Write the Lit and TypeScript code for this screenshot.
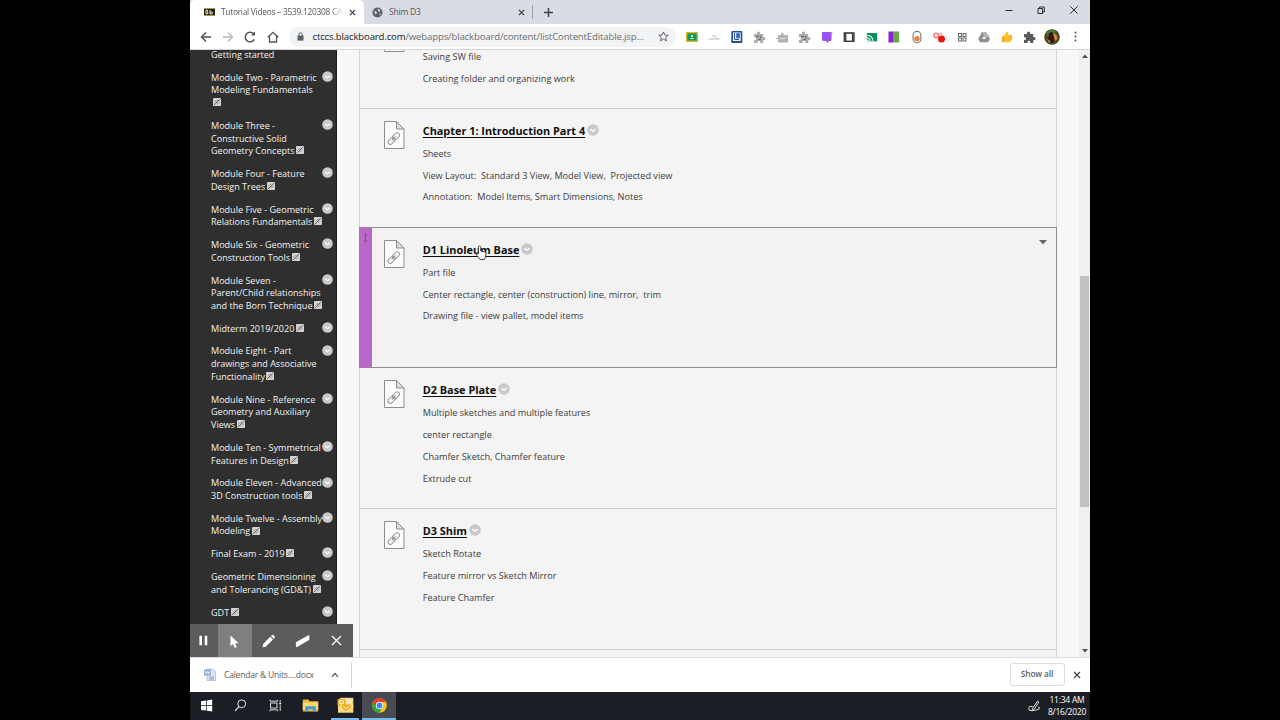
import { LitElement, html, css, svg } from "lit";
import { customElement } from "lit/decorators.js";

const modules: string[][] = [
  ["Getting started"],
  ["Module Two - Parametric", "Modeling Fundamentals", "*"],
  ["Module Three -", "Constructive Solid", "Geometry Concepts*"],
  ["Module Four - Feature", "Design Trees*"],
  ["Module Five - Geometric", "Relations Fundamentals*"],
  ["Module Six - Geometric", "Construction Tools*"],
  ["Module Seven -", "Parent/Child relationships", "and the Born Technique*"],
  ["Midterm 2019/2020*"],
  ["Module Eight - Part", "drawings and Associative", "Functionality*"],
  ["Module Nine - Reference", "Geometry and Auxiliary", "Views*"],
  ["Module Ten - Symmetrical", "Features in Design*"],
  ["Module Eleven - Advanced", "3D Construction tools*"],
  ["Module Twelve - Assembly", "Modeling*"],
  ["Final Exam - 2019*"],
  ["Geometric Dimensioning", "and Tolerancing (GD&T)*"],
  ["GDT*"],
];

const entries = [
  { cls: "first", title: "", lines: ["Saving SW file", "Creating folder and organizing work"] },
  { cls: "short", title: "Chapter 1: Introduction Part 4", lines: ["Sheets", "View Layout:\u00a0 Standard 3 View, Model View,\u00a0 Projected view", "Annotation:\u00a0 Model Items, Smart Dimensions, Notes"] },
  { cls: "active", title: "D1 Linoleum Base", lines: ["Part file", "Center rectangle, center (construction) line, mirror,\u00a0 trim", "Drawing file - view pallet, model items"] },
  { cls: "", title: "D2 Base Plate", lines: ["Multiple sketches and multiple features", "center rectangle", "Chamfer Sketch, Chamfer feature", "Extrude cut"] },
  { cls: "", title: "D3 Shim", lines: ["Sketch Rotate", "Feature mirror vs Sketch Mirror", "Feature Chamfer"] },
];

const chevron = (cls: string) => html`<svg class=${cls} viewBox="0 0 12 12"><circle cx="6" cy="6" r="5.8" /><path d="M3.4 5.1l2.6 2.2L8.6 5.1" /></svg>`;

const hidden = html`<svg class="hid" viewBox="0 0 8 8"><rect width="8" height="8" rx=".8" fill="#d2d2d2" /><path d="M1.3 4.5Q2.5 2.3 4.6 2.4M3.8 6Q5.8 5.6 6.7 3.8" fill="none" stroke="#8a8a8a" stroke-width=".7" /><path d="M1.3 6.8L6.8 1.3" fill="none" stroke="#444" stroke-width=".9" /></svg>`;

const doc = html`<svg class="doc" viewBox="0 0 22 30">
  <path d="M1.5 1.5H13.5L21 9V28.5H1.5Z" fill="#fbfbfb" stroke="#8d8d8d" />
  <path d="M13.5 1.5V9H21Z" fill="#dedede" stroke="#8d8d8d" />
  <g fill="none" stroke="#979797" stroke-width="1" transform="rotate(-45 10.8 18.5)">
    <rect x="3.5" y="16.2" width="8" height="4.6" rx="2.3" /><rect x="9.9" y="16.2" width="8" height="4.6" rx="2.3" /><path d="M7.8 18.5h6" />
  </g></svg>`;

const piece = "M2 4h3V3a1.6 1.6 0 0 1 3.2 0v1h3v3h.8a1.6 1.6 0 0 1 0 3.2h-.8V13H8.2v-1a1.3 1.3 0 0 0-2.6 0v1H2v-3h.7a1.4 1.4 0 0 0 0-2.8H2z";

const extensions = [
  svg`<rect x="1" y="2" width="12" height="10" fill="#d9b52e"/><rect x="2.4" y="3.4" width="9.2" height="7.2" fill="#159a58"/><circle cx="7" cy="6" r="1.1" fill="#fff"/><path d="M4.7 9Q7 6.8 9.3 9z" fill="#fff"/>`,
  svg`<path d="M1.5 9H12.5M5 6.5Q7 4.5 8 6.3T10.5 8" fill="none" stroke="#b9bdbd" stroke-width="1"/>`,
  svg`<rect x="1.3" y="1" width="11" height="12" rx="1" fill="#254f99"/><rect x="3" y="2.5" width="7.6" height="8.5" fill="#fff"/><path d="M6.2 3.2H9.8V8.4H6.2z" fill="#3563ad"/><path d="M4.5 3v6.5H9" fill="none" stroke="#254f99"/>`,
  svg`<path d=${piece} fill="#adadad"/><path d="M4 7l3-1M6 10l3-1M8.7 6v2" stroke="#5f5f5f"/>`,
  svg`<path d="M1 8H3V5H6V3.5a1.3 1.3 0 0 1 2.5 0V5H13V12.5H3V9H1z" fill="#b2b2b2"/><path d="M5 9.5q1-2 2.5-1t3-1" stroke="#eee" fill="none"/>`,
  svg`<path d=${piece} fill="#adadad"/><path d="M4 7l3-1M6 10l3-1M8.7 6v2" stroke="#5f5f5f"/>`,
  svg`<path d="M2 2H12.5L11.5 4.5V9.5Q11.5 11 10 11H9L7.5 13 6 11H3.5Q2 11 2 9.5z" fill="#9a54f4"/><path d="M10 4.2l2.5-2.5" stroke="#d8bcff" stroke-width=".7"/>`,
  svg`<rect x="1.6" y="2.2" width="11" height="9.8" fill="#383838"/><rect x="4.3" y="3.8" width="5.6" height="6.8" fill="#fff"/><path d="M2.3 4h1M2.3 6h1M2.3 8h1M2.3 10h1M11 4h1M11 6h1M11 8h1M11 10h1" stroke="#888" stroke-width=".7"/>`,
  svg`<rect x="1.8" y="3" width="10.4" height="8.4" fill="#0f8f5b"/><path d="M2 5.2Q7.7 5.4 8 11.2M2 7.7Q5 8 5.4 11.2" stroke="#e9fff4" fill="none" stroke-width="1.1"/><circle cx="2.8" cy="10.6" r=".9" fill="#fff"/>`,
  svg`<rect x="1.5" y="1.5" width="5.2" height="11" fill="#8521d9"/><rect x="7" y="1.5" width="5.2" height="11" fill="#6ea542"/>`,
  svg`<rect x="3.1" y="1.4" width="7.8" height="11.4" rx="3.9" fill="#fff" stroke="#6f7a85" stroke-width="1.1"/><circle cx="7" cy="8.8" r="2.7" fill="#ee8336"/>`,
  svg`<circle cx="9.5" cy="9" r="3.5" fill="#ed1111"/><circle cx="4.2" cy="5.4" r="2.2" fill="none" stroke="#f38181" stroke-width="1.6"/><circle cx="8.7" cy="4" r="1.4" fill="#f7b0b0"/>`,
  svg`<g fill="none" stroke="#686868"><rect x="3.5" y="3.5" width="3" height="3"/><rect x="8" y="3.5" width="3" height="3"/><rect x="3.5" y="8" width="3" height="3"/><rect x="8" y="8" width="3" height="3"/></g>`,
  svg`<path d="M5 2H9L13 9 11 12.2H3.2L1.2 9z" fill="#8f8f8f"/><path d="M5 2L8 7.5H13L9 2z" fill="#b5b5b5"/><path d="M7 6L5.2 9h3.6z" fill="#fff"/>`,
  svg`<path d="M3 6.5L7 1.4Q8.7 1.5 8 4.8H11Q12.6 5 12.2 6.8L11.3 11Q11 12.3 9.5 12.3H5.2L2.3 11.7z" fill="#fbc02d"/><path d="M2 6.5H4V12.3H2z" fill="#f3a526"/><path d="M9.5 7.2h2.4M9.3 9.4h2.3" stroke="#d9901c" stroke-width=".6"/>`,
  svg`<path d=${piece} fill="#57595c"/>`,
];

@customElement("app-root")
export class AppRoot extends LitElement {
  static styles = css`
    :host { display: block; width: 1280px; height: 720px; background: #000; overflow: hidden; font-family: "Open Sans", sans-serif; }
    svg { display: block; flex: none; }
    .screen { position: relative; width: 900px; height: 720px; margin: 0 auto; display: flex; flex-direction: column; background: #f4f4f4; }
    .tabs { height: 24px; flex: none; background: #d9dce2; display: flex; align-items: center; font-size: 8.5px; color: #55585c; }
    .tab { display: flex; align-items: center; height: 24px; box-sizing: border-box; white-space: nowrap; }
    .tab.on { width: 174px; background: #fff; border-radius: 5px 5px 0 0; padding-left: 14px; }
    .tab.off { width: 169px; padding-left: 8px; border-right: 1px solid #9c9fa5; height: 14px; }
    .name { overflow: hidden; margin-left: 6px; line-height: 14px; letter-spacing: -.2px; }
    .on .name { width: 122px; font-size: 8.4px; letter-spacing: -.27px; mask-image: linear-gradient(90deg, #000 90%, transparent); }
    .off .name { width: 127px; }
    .x { width: 7px; height: 7px; fill: none; stroke: #3f4246; stroke-width: 1.5; margin-left: 6px; }
    .off .x { margin-left: 2px; }
    .plus { width: 9px; height: 9px; margin-left: 10.5px; fill: none; stroke: #3f4246; stroke-width: 1.5; }
    .winctl { margin-left: auto; margin-right: 11.5px; display: flex; gap: 22.5px; fill: none; stroke: #292b2e; align-items: center; margin-top: -4px; }
    .winctl svg { width: 10px; height: 10px; }
    .bar { height: 26px; flex: none; box-sizing: border-box; border-bottom: 1px solid #d5d5d7; background: #fff; display: flex; align-items: center; }
    .nav { display: flex; gap: 8.4px; padding-left: 8.5px; fill: none; stroke: #505357; stroke-width: 1.5; }
    .nav svg { width: 14px; height: 14px; }
    .nav .dim { stroke: #b9bbbe; }
    .omni { display: flex; flex: none; align-items: center; width: 387px; height: 20px; box-sizing: border-box; border-radius: 10px; background: #f1f3f4; margin-left: 9.3px; padding: 0 7px 0 8.5px; }
    .lock { width: 7px; height: 9px; }
    .url { font-size: 9.6px; line-height: 14px; color: #6b6f73; margin-left: 8px; white-space: nowrap; letter-spacing: -.155px; }
    .url b { font-weight: 400; color: #222; }
    .star { width: 11px; height: 11px; margin-left: auto; }
    .exts { display: flex; gap: 8.5px; margin-left: 9px; align-items: center; }
    .ext { width: 14px; height: 14px; }
    .avatar { width: 16px; height: 16px; margin-left: -.5px; }
    .dots { width: 3px; height: 11px; margin-left: 5px; }
    .page { height: 607px; flex: none; display: flex; overflow: hidden; background: #f8f8f8; }
    .side { width: 147px; flex: none; background: #2f2f2f; color: #f2f2f2; font-size: 9.05px; line-height: 12.7px; box-sizing: border-box; border-right: 1px solid #1c1c1c; overflow: hidden; }
    .mods { display: flex; flex-direction: column; gap: 10.12px; padding-left: 21px; margin-top: -1.1px; }
    .mod { display: flex; justify-content: space-between; align-items: flex-start; padding-right: 4.5px; }
    .label { width: 111px; flex: none; white-space: nowrap; }
    .line { display: flex; height: 12.7px; align-items: center; }
    .hid { width: 8px; height: 8px; margin: 0 0 2.6px 1.5px; }
    .chev { width: 11px; height: 11px; fill: #c9c9c9; stroke: none; margin-top: -.8px; }
    .chev path { fill: none; stroke: #fafafa; stroke-width: 1.5; }
    .list { width: 698px; margin-left: 22px; flex: none; box-sizing: border-box; border: solid #d4d4d4; border-width: 0 1px; background: #f4f4f4; }
    .card { display: flex; box-sizing: border-box; height: 141px; border-bottom: 1px solid #cfcfcf; padding: 12.4px 0 0 23px; position: relative; overflow: hidden; }
    .card.first { height: 59px; }
    .card.first .in { margin-top: -38px; }
    .card.first .doc { margin-top: -39px; }
    .card.short { height: 118px; border-bottom: 0; padding-top: 12px; }
    .card.active { margin: 0 -1px; border: 1px solid #8e8e8e; border-left: 13px solid #ba68c8; background: #f2f2f2; padding: 12px 0 0 11px; overflow: visible; }
    .doc { width: 22px; height: 30px; margin-top: -1px; }
    .in { margin-left: 17.7px; }
    h3 { margin: 0; display: flex; align-items: center; font-size: 10.9px; line-height: 20px; height: 20px; color: #111; gap: 2px; font-weight: 700; }
    h3 span { text-decoration: underline; text-underline-offset: 1.5px; text-decoration-thickness: 1px; white-space: nowrap; }
    h3 .chev { width: 12px; height: 12px; margin-top: -2px; }
    p { margin: 0; font-size: 9.15px; line-height: 21.8px; height: 21.8px; color: #3c3c3c; white-space: nowrap; }
    .body { margin-top: 1.9px; }
    .more { position: absolute; right: 9px; top: 12px; width: 8px; height: 5px; }
    .grip { position: absolute; left: -9.5px; top: 5px; width: 5px; height: 10px; }
    .hand { position: absolute; left: 285px; top: 245px; width: 12px; height: 16px; z-index: 2; }
    .scroll { width: 11px; margin-left: auto; background: #f0f0f0; display: flex; flex-direction: column; align-items: center; justify-content: space-between; padding: 4px 0; box-sizing: border-box; }
    .thumb { width: 9px; height: 231px; background: #c1c1c1; margin-top: 17px; margin-bottom: -59px; }
    .arr { width: 6px; height: 4px; }
    .tools { position: absolute; left: 0; top: 624px; width: 163px; height: 33px; background: #5c5c5c; display: flex; z-index: 3; }
    .tool { width: 33.8px; display: flex; align-items: center; justify-content: center; }
    .tool:first-child { width: 28px; }
    .tool.sel { background: #7f7f7f; }
    .tool svg { width: 15px; height: 15px; }
    .dl { height: 35px; flex: none; background: #fff; border-top: 1px solid #dcdcdc; box-sizing: border-box; display: flex; align-items: center; font-size: 8.5px; letter-spacing: -.2px; color: #5a5d61; padding-bottom: 1px; }
    .file { display: flex; align-items: center; width: 162px; height: 26px; box-sizing: border-box; border-right: 1px solid #d5d5d5; padding-left: 14px; }
    .fname { margin-left: 8px; width: 107px; white-space: nowrap; }
    .word { width: 12px; height: 13px; }
    .up { width: 8px; height: 6px; fill: none; stroke: #55585c; stroke-width: 1.2; }
    .all { margin-left: auto; width: 55px; height: 23px; box-sizing: border-box; border: 1px solid #dadce0; border-radius: 3px; line-height: 20px; text-align: center; font-weight: 600; font-size: 8.3px; letter-spacing: -.1px; }
    .dl > .x { width: 8px; height: 8px; margin: 0 9px 0 8.5px; stroke-width: 1.2; }
    .task { flex: 1; background: #1b1e24; display: flex; align-items: center; color: #fff; }
    .app { width: 34.8px; height: 28px; box-sizing: border-box; display: flex; align-items: center; justify-content: center; border-bottom: 2px solid transparent; padding-top: 1px; }
    .app:first-child { width: 33.5px; }
    .app.run { width: 28px; margin: 0 3px 0 3.3px; border-color: #76b9ed; }
    .app.cur { width: 34px; background: #484b50; border-color: #76b9ed; }
    .app svg { width: 17px; height: 17px; }
    .pen { width: 12px; height: 12px; margin-left: auto; }
    .clock { width: 44px; margin: 0 1px 0 5px; font-size: 8.5px; line-height: 12.2px; text-align: center; white-space: nowrap; letter-spacing: -.23px; }
  `;

  private cross = html`<svg class="x" viewBox="0 0 8 8"><path d="M1 1l6 6M7 1l-6 6" /></svg>`;

  private module(lines: string[]) {
    return html`<div class="mod">
      <div class="label">${lines.map((l) => html`<div class="line">${l.replace("*", "")}${l.endsWith("*") ? hidden : ""}</div>`)}</div>
      ${lines[0] === "Getting started" ? "" : chevron("chev")}
    </div>`;
  }

  private entry(e: (typeof entries)[number]) {
    const active = e.cls === "active";
    return html`<div class="card ${e.cls}">
      ${doc}
      <div class="in">
        <h3>${e.title ? html`<span>${e.title}</span>${chevron("chev")}` : ""}</h3>
        <div class="body">${e.lines.map((l) => html`<p>${l}</p>`)}</div>
      </div>
      ${active
        ? html`<svg class="more" viewBox="0 0 8 5"><path d="M0 0h8L4 4.6z" fill="#666" /></svg>
            <svg class="grip" viewBox="0 0 5 10"><path d="M2.5 1v8M.8 2.6L2.5.9l1.7 1.7M.8 7.4l1.7 1.7 1.7-1.7" fill="none" stroke="#75407e" stroke-width=".8" /></svg>`
        : ""}
    </div>`;
  }

  render() {
    return html`<div class="screen">
      <div class="tabs">
        <div class="tab on">
          <svg width="11" height="8" viewBox="0 0 11 8"><rect width="11" height="8" fill="#26240f" /><path d="M0 .5h11M0 7.5h11" stroke="#a79a3d" /><path d="M2 2v4h1.4q1.4-1 0-2 1-1-.4-2zM6 2v4h2q1.4-1.4 0-2H6" fill="none" stroke="#eee" stroke-width=".9" /></svg>
          <span class="name">Tutorial Videos – 3539.120308 CA</span>${this.cross}
        </div>
        <div class="tab off">
          <svg width="11" height="11" viewBox="0 0 12 12"><circle cx="6" cy="6" r="5.5" fill="#5c6066" /><path d="M2 4.2l2.6.6 1 1.8-1.4 1.2.2 1.6zM6.3 1.8L9 3 8.2 5.4 6.6 4.4zM8 7l2 .2-1.4 2.2z" fill="#d9dce2" /></svg>
          <span class="name">Shim D3</span>${this.cross}
        </div>
        <svg class="plus" viewBox="0 0 9 9"><path d="M4.5 0v9M0 4.5h9" /></svg>
        <div class="winctl">
          <svg viewBox="0 0 10 10"><path d="M1.5 5.5h7" /></svg>
          <svg viewBox="0 0 10 10"><path d="M2 3.5h4.5v5H2zM3.5 3.2V2H8.3v5H6.8" /></svg>
          <svg viewBox="0 0 10 10"><path d="M1.3 1.3l7.4 7.4M8.7 1.3L1.3 8.7" /></svg>
        </div>
      </div>
      <div class="bar">
        <div class="nav">
          <svg viewBox="0 0 14 14"><path d="M12 7H3M7 2.5L2.5 7 7 11.5" /></svg>
          <svg class="dim" viewBox="0 0 14 14"><path d="M2 7h9M7 2.5L11.5 7 7 11.5" /></svg>
          <svg viewBox="0 0 14 14"><path d="M11.3 9.3A4.8 4.8 0 1 1 11 4.2" /><path d="M12 1.6V5.6H8z" fill="#505357" stroke="none" /></svg>
          <svg viewBox="0 0 14 14"><path d="M1.8 7.2L7 2.3l5.2 4.9M3.5 6v6h7V6" stroke-width="1.3" /></svg>
        </div>
        <div class="omni">
          <svg class="lock" viewBox="0 0 7 9"><rect x=".5" y="3.6" width="6" height="5" fill="#5b5f63" /><path d="M1.9 4V2.4a1.6 1.6 0 0 1 3.2 0V4" fill="none" stroke="#5b5f63" /></svg>
          <span class="url"><b>ctccs.blackboard.com</b>/webapps/blackboard/content/listContentEditable.jsp...</span>
          <svg class="star" viewBox="0 0 12 12"><path d="M6 1l1.5 3.3 3.6.4-2.7 2.4.8 3.6L6 8.9l-3.2 1.8.8-3.6L.9 4.7l3.6-.4z" fill="none" stroke="#55585c" /></svg>
        </div>
        <div class="exts">
          ${extensions.map((x) => html`<svg class="ext" viewBox="0 0 14 14">${x}</svg>`)}
          <svg class="avatar" viewBox="0 0 16 16"><circle cx="8" cy="8" r="7.8" fill="#4b4a22" /><path d="M2 4Q7-1 12 2l-2 4-5 2z" fill="#4f7d35" /><path d="M5 4q3-2 4 0t3 5l-2 4-4 1-2-4z" fill="#3a160c" /><path d="M9 4.5l3.5 1 1 4.5-2.5 2zM3 10l3.5 2-1 2z" fill="#c98a4c" /></svg>
          <svg class="dots" viewBox="0 0 3 11"><g fill="#505357"><circle cx="1.5" cy="1.5" r="1" /><circle cx="1.5" cy="5.5" r="1" /><circle cx="1.5" cy="9.5" r="1" /></g></svg>
        </div>
      </div>
      <div class="page">
        <div class="side"><div class="mods">${modules.map((m) => this.module(m))}</div></div>
        <div class="list">${entries.map((e) => this.entry(e))}</div>
        <div class="scroll">
          <svg class="arr" viewBox="0 0 6 4"><path d="M0 4l3-3.5L6 4z" fill="#505050" /></svg>
          <div class="thumb"></div>
          <svg class="arr" viewBox="0 0 6 4"><path d="M0 0l3 3.5L6 0z" fill="#505050" /></svg>
        </div>
      </div>
      <div class="dl">
        <div class="file">
          <svg class="word" viewBox="0 0 12 13"><path d="M3 1h6l2.5 2.5V12.5H3z" fill="#dce8f6" stroke="#a6bddb" stroke-width=".8" /><rect x="0" y="1.5" width="7" height="6" fill="#8da9d6" /><path d="M1.3 3l1 3L3.5 3.5 4.7 6l1-3" fill="none" stroke="#fff" stroke-width=".8" /><path d="M5 9h5M5 11h5" stroke="#6f9bd0" /></svg>
          <span class="fname">Calendar &amp; Units....docx</span>
          <svg class="up" viewBox="0 0 8 6"><path d="M1 4.8L4 1.5l3 3.3" /></svg>
        </div>
        <div class="all">Show all</div>
        ${this.cross}
      </div>
      <div class="task">
        <div class="app"><svg viewBox="0 0 17 17"><path d="M3 4.2l5-.7v4.7H3zM8.7 3.4l5.5-.8v5.6H8.7zM3 8.9h5v4.7l-5-.7zM8.7 8.9h5.5v5.6l-5.5-.8z" fill="#fff" /></svg></div>
        <div class="app"><svg viewBox="0 0 17 17"><circle cx="9.7" cy="6.8" r="3.9" fill="none" stroke="#e8e8e8" /><path d="M7 9.6L3 13.8" stroke="#e8e8e8" stroke-width="1.2" /></svg></div>
        <div class="app"><svg viewBox="0 0 17 17"><path d="M3.5 6h6.5v5H3.5zM3 2.8v1.4h7.5V2.8M3 14.3v-1.5h7.5v1.5M13.2 3v2M13.2 8.2V14" fill="none" stroke="#dcdcdc" /><circle cx="13.2" cy="6.5" r="1" fill="#fff" /></svg></div>
        <div class="app"><svg viewBox="0 0 17 17"><path d="M.8 2.5h5.5l1.3 1.7h8.6V14.5H.8z" fill="#f4b73f" /><path d="M.8 5.5h15.4v7H.8z" fill="#ffd969" /><path d="M3.3 14.8V9.3h10.4v5.5h-2.8v-2.6H6.1v2.6z" fill="#3f9bd8" /></svg></div>
        <div class="app run"><svg viewBox="0 0 17 17"><rect x="3" y=".8" width="13.3" height="10" fill="#f9dc94" /><path d="M8 3h7M9 5.5h6" stroke="#fff3d0" /><rect x=".5" y="2" width="8" height="6.5" rx="1" fill="#f0a92b" /><circle cx="4.5" cy="5.2" r="1.9" fill="none" stroke="#fff" stroke-width="1.1" /><path d="M1 7.5l8 4.5 7.3-4.5V15.8H1z" fill="#fcd77c" /><path d="M5 7.5h8.5v3.3L9.2 14 5 10.8z" fill="#eea81d" /><path d="M6.3 9.3l3 2.3 3-2.3" stroke="#fff" fill="none" /></svg></div>
        <div class="app cur"><svg viewBox="0 0 17 17"><circle cx="8.5" cy="8.5" r="7.3" fill="#fbc116" /><path d="M2.2 4.9A7.3 7.3 0 0 1 14.8 4.9H8.5L5.4 10.3z" fill="#e33b2e" /><path d="M2.2 4.9A7.3 7.3 0 0 0 8.3 15.8L11.6 10.3 5.4 10.3z" fill="#2ca24c" /><circle cx="8.5" cy="8.5" r="3.7" fill="#fff" /><circle cx="8.5" cy="8.5" r="2.9" fill="#4285e8" /></svg></div>
        <svg class="pen" viewBox="0 0 12 12"><path d="M4.5 8.5L9.5 1.2l1.4 1L6 9.5l-2 .7zM4.7 6.5q-4-.5-4 2t3 2.2 4-.5 3.4-1.2q1-1.8-1-2.2" fill="none" stroke="#e6e6e6" stroke-width="1" /></svg>
        <div class="clock">11:34 AM<br />8/16/2020</div>
      </div>
      <svg class="hand" viewBox="0 0 12 16"><path d="M3.5 9V2.2a1.1 1.1 0 0 1 2.2 0V6l4 .9q1.5.4 1.3 2l-.6 3.3-1 2.3H5L2.3 11 1 9.2q.8-1.5 2.5-.2z" fill="#fff" stroke="#333" stroke-width=".9" /></svg>
      <div class="tools">
        <div class="tool"><svg viewBox="0 0 15 15"><path d="M3.4 2.7h2.6v9.6H3.4zM8.7 2.7h2.6v9.6H8.7z" fill="#fff" /></svg></div>
        <div class="tool sel"><svg viewBox="0 0 15 15"><path d="M3.5 2.5V13.2L6 11l1.8 4 2-.9L8 10.3h3.6z" fill="#fff" /></svg></div>
        <div class="tool"><svg viewBox="0 0 15 15"><path d="M1.5 14.3l.6-3.3L9.3 3.8l2.7 2.6-7.3 7.3zM10 3.1l1-1q.7-.5 1.4 0l1.3 1.3q.5.7 0 1.4l-1 1z" fill="#fff" /></svg></div>
        <div class="tool"><svg viewBox="0 0 15 15"><path d="M1 9.2L13.3 2.3Q14.4 1.9 14.4 3.1V6.7L2.2 14Q.8 14.5 .8 13.1z" fill="#fff" /></svg></div>
        <div class="tool"><svg viewBox="0 0 15 15"><path d="M3 3l9 9M12 3l-9 9" stroke="#fff" stroke-width="1.3" /></svg></div>
      </div>
    </div>`;
  }
}
